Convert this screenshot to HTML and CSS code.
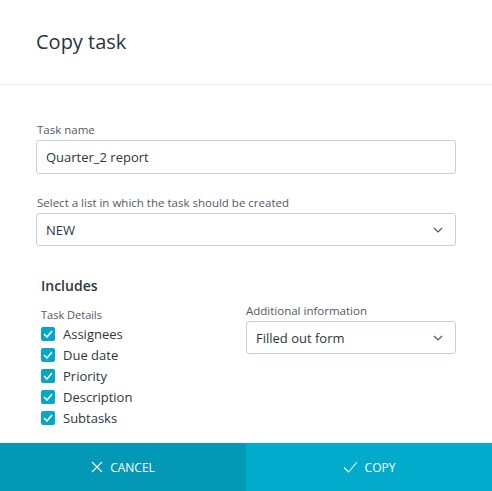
FILE: index.html
```html
<!DOCTYPE html>
<html lang="en">
<head>
  <meta charset="UTF-8" />
  <meta name="viewport" content="width=device-width, initial-scale=1.0"/>
  <title>Copy task</title>
  <link rel="stylesheet" href="styles.css">
</head>
<body>
  <div class="dialog">
    <div class="dialog-header">
      <h2>Copy task</h2>
    </div>
    <div class="dialog-body">
      <div class="field">
        <label class="field-label">Task name</label>
        <div class="input">Quarter_2 report</div>
      </div>
      <div class="field">
        <label class="field-label">Select a list in which the task should be created</label>
        <div class="input select">
          <span>NEW</span>
          <svg class="chevron" width="10" height="6" viewBox="0 0 10 6"><path d="M1 1l4 4 4-4" fill="none" stroke="#555" stroke-width="1.2"/></svg>
        </div>
      </div>
      <div class="includes-title">Includes</div>
      <div class="includes">
        <div class="col-details">
          <div class="small-label">Task Details</div>
          <div class="check-row"><span class="box"><svg width="10" height="8" viewBox="0 0 10 8"><path d="M1 4l3 3 5-6" fill="none" stroke="#fff" stroke-width="1.6"/></svg></span>Assignees</div>
          <div class="check-row"><span class="box"><svg width="10" height="8" viewBox="0 0 10 8"><path d="M1 4l3 3 5-6" fill="none" stroke="#fff" stroke-width="1.6"/></svg></span>Due date</div>
          <div class="check-row"><span class="box"><svg width="10" height="8" viewBox="0 0 10 8"><path d="M1 4l3 3 5-6" fill="none" stroke="#fff" stroke-width="1.6"/></svg></span>Priority</div>
          <div class="check-row"><span class="box"><svg width="10" height="8" viewBox="0 0 10 8"><path d="M1 4l3 3 5-6" fill="none" stroke="#fff" stroke-width="1.6"/></svg></span>Description</div>
          <div class="check-row"><span class="box"><svg width="10" height="8" viewBox="0 0 10 8"><path d="M1 4l3 3 5-6" fill="none" stroke="#fff" stroke-width="1.6"/></svg></span>Subtasks</div>
        </div>
        <div class="col-extra">
          <label class="field-label">Additional information</label>
          <div class="input select">
            <span>Filled out form</span>
            <svg class="chevron" width="10" height="6" viewBox="0 0 10 6"><path d="M1 1l4 4 4-4" fill="none" stroke="#555" stroke-width="1.2"/></svg>
          </div>
        </div>
      </div>
    </div>
    <div class="dialog-footer">
      <button class="btn btn-cancel">
        <svg width="12" height="12" viewBox="0 0 12 12"><path d="M1 1l10 10M11 1L1 11" stroke="#fff" stroke-width="1.1"/></svg>
        CANCEL
      </button>
      <button class="btn btn-copy">
        <svg width="15" height="12" viewBox="0 0 15 12"><path d="M1 6.5l4.5 4.5L14 1" fill="none" stroke="#fff" stroke-width="1.1"/></svg>
        COPY
      </button>
    </div>
  </div>
</body>
</html>
```

FILE: styles.css
```css
html, body {
  margin: 0;
  padding: 0;
  background: #ffffff;
}
body {
  font-family: "Open Sans", "Liberation Sans", Arial, sans-serif;
  color: #2d3640;
}
.dialog {
  width: 492px;
  height: 491px;
  display: flex;
  flex-direction: column;
  background: #fff;
}
.dialog-header {
  height: 85px;
  box-sizing: border-box;
  border-bottom: 1px solid #e8ecf0;
  padding: 28px 36px 0 36px;
}
.dialog-header h2 {
  margin: 0;
  font-size: 20px;
  font-weight: 400;
  color: #2b3540;
}
.dialog-body {
  flex: 1;
  padding: 37px 36px 0 36px;
}
.field {
  margin-bottom: 21px;
}
.field-label {
  display: block;
  font-size: 11.5px;
  color: #505a64;
  padding-left: 1px;
  margin-bottom: 2px;
  line-height: 16px;
}
.input {
  height: 34px;
  box-sizing: border-box;
  border: 1px solid #c9cfd5;
  border-radius: 3px;
  padding: 0 9px;
  font-size: 13px;
  line-height: 32px;
  color: #2d3640;
}
.select {
  display: flex;
  justify-content: space-between;
  align-items: center;
  height: 33px;
}
.chevron {
  margin-right: 3px;
}
/* margin collapses with the field above, so this is the full gap */
.includes-title {
  font-size: 14px;
  font-weight: 600;
  color: #2d3640;
  padding-left: 5px;
  margin-top: 30px;
  margin-bottom: 12px;
}
.includes {
  display: flex;
  gap: 17px;
}
.col-details {
  width: 188px;
  padding-left: 5px;
}
.col-extra {
  flex: 1;
  margin-top: -4px;
}
.col-extra .field-label {
  padding-left: 0;
}
.small-label {
  font-size: 11px;
  color: #505a64;
  line-height: 16px;
}
.check-row {
  display: flex;
  align-items: center;
  font-size: 13px;
  color: #2d3640;
  height: 21px;
}
.box {
  width: 14px;
  height: 14px;
  background: #04a7c9;
  border-radius: 2px;
  display: flex;
  align-items: center;
  justify-content: center;
  margin-right: 8px;
}
.dialog-footer {
  display: flex;
  height: 48px;
}
.btn {
  flex: 0 0 246px;
  border: none;
  color: #fff;
  font-family: "Open Sans", "Liberation Sans", Arial, sans-serif;
  font-size: 12px;
  display: flex;
  align-items: center;
  justify-content: center;
  gap: 7px;
  cursor: pointer;
  padding: 0;
}
.btn-cancel {
  background: #0298b6;
}
.btn-copy {
  background: #02aacb;
}
```
